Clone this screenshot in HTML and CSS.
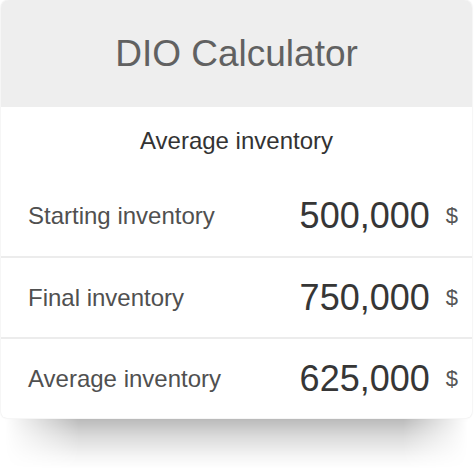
FILE: index.html
```html
<!DOCTYPE html>
<html>
<head>
<meta charset="utf-8">
<link rel="stylesheet" href="styles.css">
</head>
<body>
<div class="card">
  <div class="header"><h1 class="title">DIO Calculator</h1></div>
  <div class="section">Average inventory</div>
  <div class="row">
    <span class="label">Starting inventory</span>
    <span class="value">500,000</span>
    <span class="unit">$</span>
  </div>
  <div class="row sep">
    <span class="label">Final inventory</span>
    <span class="value">750,000</span>
    <span class="unit">$</span>
  </div>
  <div class="row sep">
    <span class="label">Average inventory</span>
    <span class="value">625,000</span>
    <span class="unit">$</span>
  </div>
</div>
<div class="drop"></div>
</body>
</html>
```
FILE: styles.css
```css
html, body {
  margin: 0;
  padding: 0;
  background: #ffffff;
}
body {
  padding: 0 2px 0 1px;
  font-family: "Liberation Sans", Arial, Helvetica, sans-serif;
}
.card {
  background: #ffffff;
  border-radius: 8px 8px 6px 6px;
  box-shadow: 0 0 2px rgba(0,0,0,0.14);
  overflow: hidden;
}
.header {
  height: 107px;
  background: #eeeeee;
  display: flex;
  align-items: center;
  justify-content: center;
}
.title {
  margin: 0;
  font-weight: normal;
  font-size: 37px;
  color: #616161;
}
.section {
  height: 68px;
  display: flex;
  align-items: center;
  justify-content: center;
  font-size: 24px;
  color: #333333;
}
.row {
  box-sizing: border-box;
  height: 81px;
  display: flex;
  align-items: center;
  padding: 0 14px 0 27px;
}
.sep {
  border-top: 2px solid #ececec;
}
.label {
  flex: 1;
  font-size: 24px;
  color: #505050;
}
.value {
  font-size: 36px;
  color: #363636;
}
.unit {
  margin-left: 16px;
  font-size: 22px;
  color: #555555;
}
.drop {
  height: 50px;
  margin: 1px 4px 0 4px;
  background: linear-gradient(to bottom, rgba(0,0,0,0.27) 0%, rgba(0,0,0,0.14) 35%, rgba(0,0,0,0.04) 75%, rgba(0,0,0,0) 100%);
  -webkit-mask-image: linear-gradient(to right, transparent 0%, #000 16%, #000 86%, transparent 100%);
  mask-image: linear-gradient(to right, transparent 0%, #000 16%, #000 86%, transparent 100%);
}
```
